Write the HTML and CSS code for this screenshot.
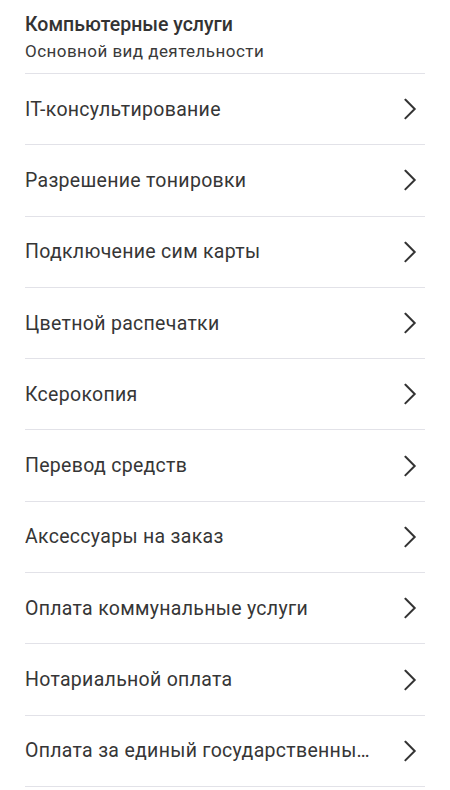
FILE: index.html
```html
<!DOCTYPE html>
<html lang="ru">
<head>
<meta charset="utf-8">
<link rel="stylesheet" href="styles.css">
</head>
<body>
<div class="page">
  <header class="head">
    <div class="title">Компьютерные услуги</div>
    <div class="subtitle">Основной вид деятельности</div>
  </header>
  <ul class="list">
    <li class="row"><span class="label">IT-консультирование</span><svg class="chev" viewBox="0 0 24 24"><path d="M6.5 2.8l9.2 9.2-9.2 9.2"/></svg></li>
    <li class="row"><span class="label">Разрешение тонировки</span><svg class="chev" viewBox="0 0 24 24"><path d="M6.5 2.8l9.2 9.2-9.2 9.2"/></svg></li>
    <li class="row"><span class="label">Подключение сим карты</span><svg class="chev" viewBox="0 0 24 24"><path d="M6.5 2.8l9.2 9.2-9.2 9.2"/></svg></li>
    <li class="row"><span class="label">Цветной распечатки</span><svg class="chev" viewBox="0 0 24 24"><path d="M6.5 2.8l9.2 9.2-9.2 9.2"/></svg></li>
    <li class="row"><span class="label">Ксерокопия</span><svg class="chev" viewBox="0 0 24 24"><path d="M6.5 2.8l9.2 9.2-9.2 9.2"/></svg></li>
    <li class="row"><span class="label">Перевод средств</span><svg class="chev" viewBox="0 0 24 24"><path d="M6.5 2.8l9.2 9.2-9.2 9.2"/></svg></li>
    <li class="row"><span class="label">Аксессуары на заказ</span><svg class="chev" viewBox="0 0 24 24"><path d="M6.5 2.8l9.2 9.2-9.2 9.2"/></svg></li>
    <li class="row"><span class="label">Оплата коммунальные услуги</span><svg class="chev" viewBox="0 0 24 24"><path d="M6.5 2.8l9.2 9.2-9.2 9.2"/></svg></li>
    <li class="row"><span class="label">Нотариальной оплата</span><svg class="chev" viewBox="0 0 24 24"><path d="M6.5 2.8l9.2 9.2-9.2 9.2"/></svg></li>
    <li class="row"><span class="label">Оплата за единый государственный реестр</span><svg class="chev" viewBox="0 0 24 24"><path d="M6.5 2.8l9.2 9.2-9.2 9.2"/></svg></li>
  </ul>
</div>
</body>
</html>
```
FILE: styles.css
```css
html, body {
  margin: 0;
  padding: 0;
  background: #ffffff;
}
body {
  font-family: Roboto, "Noto Sans", sans-serif;
  color: #333333;
}
.page {
  padding: 0 25px;
}
.head {
  padding-top: 12px;
  height: 74px;
  box-sizing: border-box;
  border-bottom: 1px solid #e2e2e8;
}
.title {
  font-size: 19.5px;
  font-weight: 500;
  line-height: 26px;
  color: #333333;
}
.subtitle {
  font-size: 17px;
  letter-spacing: 0.45px;
  line-height: 26px;
  color: #3a3a3a;
}
.list {
  list-style: none;
  margin: 0;
  padding: 0;
}
.row {
  display: flex;
  align-items: center;
  height: 71.3px;
  box-sizing: border-box;
  border-bottom: 1px solid #e2e2e8;
}
.label {
  flex: 1;
  min-width: 0;
  font-size: 19.5px;
  letter-spacing: 0.3px;
  color: #363636;
  white-space: nowrap;
  overflow: hidden;
  text-overflow: ellipsis;
  padding-right: 26px;
}
.chev {
  width: 24px;
  height: 24px;
  flex: none;
  margin-right: 2.5px;
}
.chev path {
  fill: none;
  stroke: #333333;
  stroke-width: 2;
  stroke-linecap: square;
}
```
